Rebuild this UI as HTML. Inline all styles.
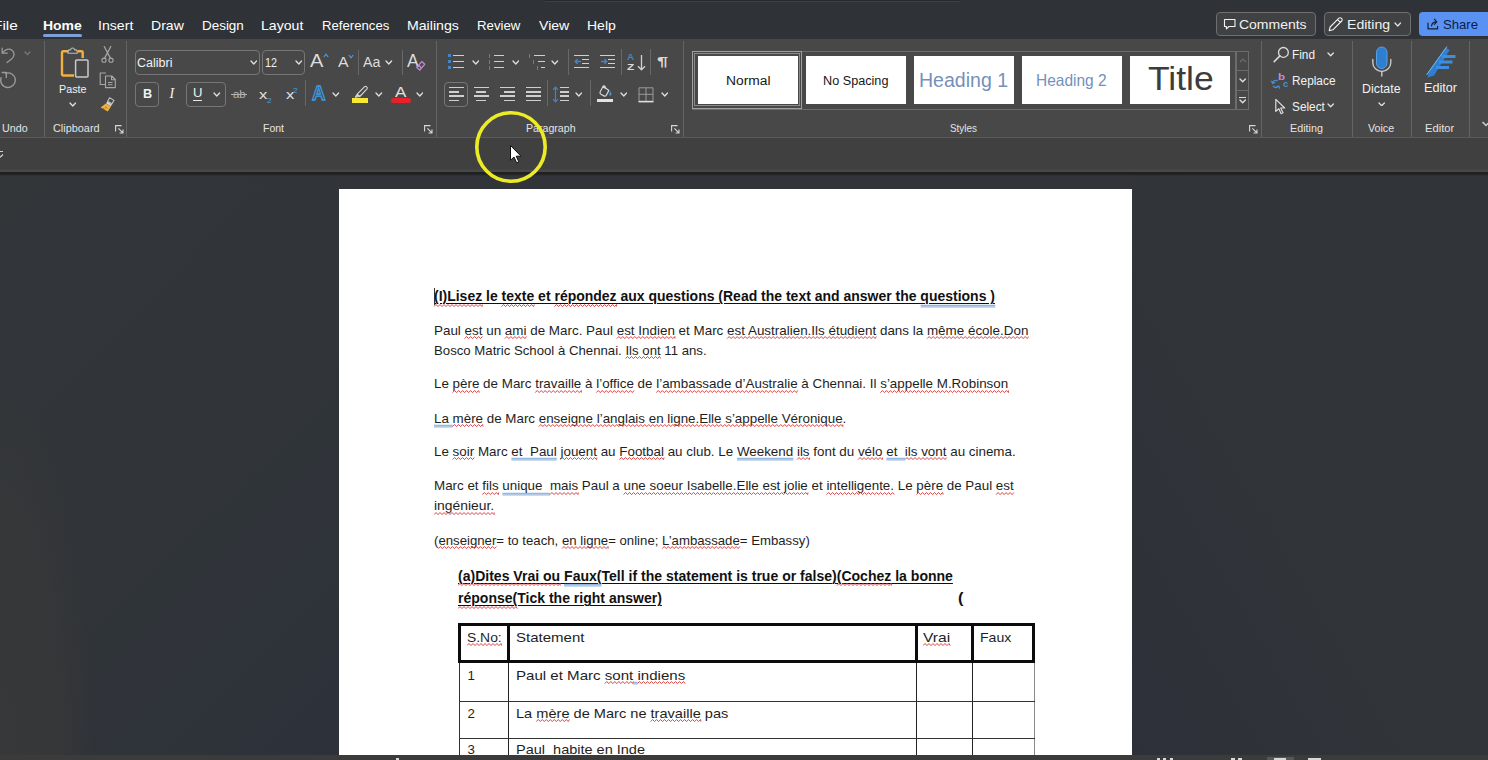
<!DOCTYPE html>
<html lang="fr"><head><meta charset="utf-8"><title>Document - Word</title>
<style>
html,body{margin:0;padding:0;}
body{width:1488px;height:760px;overflow:hidden;position:relative;background:#313539;font-family:"Liberation Sans",sans-serif;color:#fff;}
.t{position:absolute;white-space:pre;line-height:1;transform-origin:0 0;}
.d{color:#1a1a1a;}
.u{text-decoration:underline;text-decoration-thickness:1px;text-underline-offset:2px;}
.w{text-decoration:underline wavy #e23a3a;text-decoration-thickness:1px;text-underline-offset:2.5px;text-decoration-skip-ink:none;}
.g{text-decoration:underline double #3f7fd0;text-decoration-thickness:1px;text-underline-offset:2.5px;text-decoration-skip-ink:none;}
#top{position:absolute;left:0;top:0;width:1488px;height:39px;background:#2f3337;}
#rib{position:absolute;left:0;top:39px;width:1488px;height:98px;background:#484848;border-bottom:1px solid #5c5c5c;}
#qat{position:absolute;left:0;top:138px;width:1488px;height:33.5px;background:linear-gradient(#404040 0,#404040 31px,#494949 32.5px,#484848 33.5px);border-bottom:2px solid #202020;box-shadow:0 1px 1.5px rgba(20,20,20,.6);}
#page{position:absolute;left:338.5px;top:189.2px;width:793px;height:566px;background:#fff;}
#status{position:absolute;left:0;top:755px;width:1488px;height:5px;background:#3b3b3b;}
.sep{position:absolute;width:1px;background:#666;}
.btn{position:absolute;box-sizing:border-box;border:1px solid #757575;border-radius:4px;}
#status2{position:absolute;left:0;top:755px;width:1488px;height:5px;background:#3b3b3b;}
#bgl{position:absolute;left:0;top:172px;width:339px;height:583px;background:linear-gradient(135deg,#333639 0%,#313539 45%,#2d323a 100%);}
#bgl2{position:absolute;left:0;top:380px;width:120px;height:375px;background:radial-gradient(ellipse 95px 370px at 0% 100%,#373838 0%,#363738 55%,rgba(54,55,56,0) 100%);}
#bgr{position:absolute;left:1131px;top:172px;width:357px;height:583px;background:linear-gradient(60deg,#2d3039 0%,#303338 35%,#313539 60%);}

</style></head>
<body>
<div id="bgl"></div><div id="bgl2"></div><div id="bgr"></div>
<div id="top"><div style="position:absolute;left:545px;top:0;width:415px;height:1px;background:#26292c"></div><div style="position:absolute;left:545px;top:1px;width:415px;height:1px;background:#3d4145"></div></div><div id="rib"></div><div id="qat"></div><div id="page"></div><div id="status"></div>
<span class="t " style="left:-6.78px;top:18.70px;font-size:13.00px;transform:scaleX(1.1839);">File</span>
<span class="t " style="left:42.72px;top:18.70px;font-size:13.00px;transform:scaleX(1.0742);font-weight:bold;">Home</span>
<span class="t " style="left:98.22px;top:18.70px;font-size:13.00px;transform:scaleX(1.0857);">Insert</span>
<span class="t " style="left:151.22px;top:18.70px;font-size:13.00px;transform:scaleX(1.0812);">Draw</span>
<span class="t " style="left:201.72px;top:18.70px;font-size:13.00px;transform:scaleX(1.0329);">Design</span>
<span class="t " style="left:261.22px;top:18.70px;font-size:13.00px;transform:scaleX(1.0837);">Layout</span>
<span class="t " style="left:322.22px;top:18.70px;font-size:13.00px;transform:scaleX(1.0123);">References</span>
<span class="t " style="left:407.22px;top:18.70px;font-size:13.00px;transform:scaleX(1.0863);">Mailings</span>
<span class="t " style="left:477.22px;top:18.70px;font-size:13.00px;transform:scaleX(1.0158);">Review</span>
<span class="t " style="left:539.22px;top:18.70px;font-size:13.00px;transform:scaleX(1.0843);">View</span>
<span class="t " style="left:587.22px;top:18.70px;font-size:13.00px;transform:scaleX(1.0771);">Help</span>
<div class="" style="position:absolute;left:43px;top:34px;width:39px;height:3px;background:#7f9fd8;border-radius:2px;"></div>
<div class="" style="position:absolute;left:1216px;top:12px;width:100px;height:24px;border:1px solid #6f6f6f;border-radius:4px;box-sizing:border-box;background:#3f4142;"></div>
<svg style="position:absolute;left:1223px;top:18px" width="14" height="12" viewBox="0 0 14 12" fill="none"><path d="M1.5 1.5h10.5v7h-6l-2.6 2.4v-2.4h-1.9z" stroke="#f2f2f2" stroke-width="1.1" stroke-linejoin="round"/></svg>
<span class="t " style="left:1239.47px;top:17.75px;font-size:13.00px;transform:scaleX(1.0748);color:#f2f2f2;">Comments</span>
<div class="" style="position:absolute;left:1324px;top:12px;width:87px;height:24px;border:1px solid #6f6f6f;border-radius:4px;box-sizing:border-box;background:#3f4142;"></div>
<svg style="position:absolute;left:1328px;top:17px" width="16" height="15" viewBox="0 0 16 15" fill="none"><path d="M1.2 13.6l.9-3.6L10.9 1.2a1.6 1.6 0 0 1 2.3 0l.5.5a1.6 1.6 0 0 1 0 2.3L4.9 12.8z M9.6 2.6l2.7 2.7" stroke="#f2f2f2" stroke-width="1.1" stroke-linejoin="round"/></svg>
<span class="t " style="left:1347.22px;top:17.75px;font-size:13.00px;transform:scaleX(1.0830);color:#f2f2f2;">Editing</span>
<svg style="position:absolute;left:1394.25px;top:22px" width="7.5" height="5" viewBox="0 0 7.5 5" fill="none"><path d="M1 1l2.75 3 l2.75 -3" stroke="#e0e0e0" stroke-width="1.3" stroke-linecap="round" stroke-linejoin="round"/></svg>
<div class="" style="position:absolute;left:1419px;top:12px;width:75px;height:24px;border-radius:4px;background:#5a92f3;"></div>
<svg style="position:absolute;left:1426px;top:17px" width="14" height="14" viewBox="0 0 14 14" fill="none"><path d="M2 6.2v5.6h9.6V9.4 M5.6 8.8c.3-2.6 2-3.9 4.6-4 M8.4 2.2l2.4 2.6-2.4 2.5" stroke="#15202e" stroke-width="1.2" stroke-linejoin="round" stroke-linecap="round"/></svg>
<span class="t " style="left:1442.72px;top:17.75px;font-size:13.00px;transform:scaleX(1.0103);color:#0e1c4a;">Share</span>
<div class="" style="position:absolute;left:44px;top:41px;width:1px;height:96px;background:#646464;"></div>
<div class="" style="position:absolute;left:126px;top:41px;width:1px;height:96px;background:#646464;"></div>
<div class="" style="position:absolute;left:435.5px;top:41px;width:1px;height:96px;background:#646464;"></div>
<div class="" style="position:absolute;left:683px;top:41px;width:1px;height:96px;background:#646464;"></div>
<div class="" style="position:absolute;left:1260.5px;top:41px;width:1px;height:96px;background:#646464;"></div>
<div class="" style="position:absolute;left:1352px;top:41px;width:1px;height:96px;background:#646464;"></div>
<div class="" style="position:absolute;left:1411px;top:41px;width:1px;height:96px;background:#646464;"></div>
<div class="" style="position:absolute;left:1468.5px;top:41px;width:1px;height:96px;background:#646464;"></div>
<div class="" style="position:absolute;left:357.5px;top:50px;width:1px;height:25px;background:#686868;"></div>
<div class="" style="position:absolute;left:402px;top:50px;width:1px;height:25px;background:#686868;"></div>
<div class="" style="position:absolute;left:304.5px;top:80px;width:1px;height:26px;background:#686868;"></div>
<div class="" style="position:absolute;left:567.5px;top:49px;width:1px;height:26px;background:#686868;"></div>
<div class="" style="position:absolute;left:621px;top:49px;width:1px;height:26px;background:#686868;"></div>
<div class="" style="position:absolute;left:649.5px;top:49px;width:1px;height:26px;background:#686868;"></div>
<div class="" style="position:absolute;left:547px;top:80px;width:1px;height:26px;background:#686868;"></div>
<div class="" style="position:absolute;left:590px;top:80px;width:1px;height:26px;background:#686868;"></div>
<span class="t " style="left:2.21px;top:123.47px;font-size:11.50px;transform:scaleX(0.9330);color:#e4e4e4;">Undo</span>
<span class="t " style="left:53.21px;top:123.47px;font-size:11.50px;transform:scaleX(0.9457);color:#e4e4e4;">Clipboard</span>
<span class="t " style="left:262.81px;top:123.47px;font-size:11.50px;transform:scaleX(0.9104);color:#e4e4e4;">Font</span>
<span class="t " style="left:526.11px;top:123.47px;font-size:11.50px;transform:scaleX(0.9226);color:#e4e4e4;">Paragraph</span>
<span class="t " style="left:949.81px;top:123.47px;font-size:11.50px;transform:scaleX(0.8590);color:#e4e4e4;">Styles</span>
<span class="t " style="left:1289.81px;top:123.47px;font-size:11.50px;transform:scaleX(0.9356);color:#e4e4e4;">Editing</span>
<span class="t " style="left:1367.81px;top:123.47px;font-size:11.50px;transform:scaleX(0.9295);color:#e4e4e4;">Voice</span>
<span class="t " style="left:1424.81px;top:123.47px;font-size:11.50px;transform:scaleX(0.9703);color:#e4e4e4;">Editor</span>
<svg style="position:absolute;left:114.5px;top:124.5px" width="9" height="9" viewBox="0 0 9 9" fill="none"><path d="M.6 6.5V.6h5.9 M3.4 3.4l4.3 4.3 M4.6 8h3.4V4.6" stroke="#d8d8d8" stroke-width="1.1"/></svg>
<svg style="position:absolute;left:423.5px;top:124.5px" width="9" height="9" viewBox="0 0 9 9" fill="none"><path d="M.6 6.5V.6h5.9 M3.4 3.4l4.3 4.3 M4.6 8h3.4V4.6" stroke="#d8d8d8" stroke-width="1.1"/></svg>
<svg style="position:absolute;left:670.5px;top:124.5px" width="9" height="9" viewBox="0 0 9 9" fill="none"><path d="M.6 6.5V.6h5.9 M3.4 3.4l4.3 4.3 M4.6 8h3.4V4.6" stroke="#d8d8d8" stroke-width="1.1"/></svg>
<svg style="position:absolute;left:1248.5px;top:124.5px" width="9" height="9" viewBox="0 0 9 9" fill="none"><path d="M.6 6.5V.6h5.9 M3.4 3.4l4.3 4.3 M4.6 8h3.4V4.6" stroke="#d8d8d8" stroke-width="1.1"/></svg>
<svg style="position:absolute;left:0px;top:46px" width="18" height="18" viewBox="0 0 18 18" fill="none"><path d="M2.2 2.2v5h5 M2.6 7c2.2-3.6 6.4-5 9.4-2.8 3 2.300 2.600 6.300-.4 8.700L7 16.500" stroke="#9a9a9a" stroke-width="1.3" stroke-linecap="round" stroke-linejoin="round"/></svg>
<svg style="position:absolute;left:24px;top:51.2px" width="7" height="4.6" viewBox="0 0 7 4.6" fill="none"><path d="M1 1l2.5 2.6 l2.5 -2.6" stroke="#7c7c7c" stroke-width="1.2" stroke-linecap="round" stroke-linejoin="round"/></svg>
<svg style="position:absolute;left:-1px;top:71px" width="18" height="18" viewBox="0 0 18 18" fill="none"><path d="M6.500 2.340A7.300 7.300 0 1 1 2.140 6.700 M3.200 1.500h4.100v5.100" stroke="#9a9a9a" stroke-width="1.400" stroke-linecap="round" stroke-linejoin="round"/></svg>
<svg style="position:absolute;left:60px;top:46px" width="30" height="33" viewBox="0 0 30 33" fill="none"><path d="M8.500 5.200H3.300a1.300 1.300 0 0 0-1.300 1.300v21.700a1.300 1.300 0 0 0 1.300 1.300H14 M17.500 5.200h3.900a1.300 1.300 0 0 1 1.300 1.300V12" stroke="#f0b042" stroke-width="2.4" stroke-linejoin="round"/><path d="M8 7.200V5.500c0-1 .7-1.600 1.600-1.600h1c.2-1.200 1-1.900 2-1.900s1.800.7 2 1.900h1c.9 0 1.600.6 1.600 1.600v1.700z" stroke="#bdbdbd" stroke-width="1.100" stroke-linejoin="round"/><rect x="15.600" y="14" width="12.400" height="17" rx="1" stroke="#c9c9c9" stroke-width="1.500" fill="#484848"/></svg>
<span class="t " style="left:59.19px;top:84.41px;font-size:11.80px;transform:scaleX(0.9107);color:#f2f2f2;">Paste</span>
<svg style="position:absolute;left:68.5px;top:101.7px" width="7.6" height="5" viewBox="0 0 7.6 5" fill="none"><path d="M1 1l2.8 3 l2.8 -3" stroke="#e0e0e0" stroke-width="1.3" stroke-linecap="round" stroke-linejoin="round"/></svg>
<svg style="position:absolute;left:101px;top:45px" width="13" height="19" viewBox="0 0 13 19" fill="none"><path d="M3.200 1.500l6.200 11.600 M9.800 1.500L3.600 13.100" stroke="#a8a8a8" stroke-width="1.200" stroke-linecap="round"/><circle cx="3" cy="15.200" r="2.100" stroke="#a8a8a8" stroke-width="1.100"/><circle cx="10" cy="15.200" r="2.100" stroke="#a8a8a8" stroke-width="1.100"/></svg>
<svg style="position:absolute;left:98.5px;top:72px" width="18" height="17" viewBox="0 0 18 17" fill="none"><path d="M6.500 12.500H1.200V1H7 M6.500 4v11.600h9.800V7.500L12.800 4z M12.500 4.200v3.600h3.600 M9 10.500h4.500 M9 12.800h4.500" stroke="#a8a8a8" stroke-width="1.100" stroke-linejoin="round"/></svg>
<svg style="position:absolute;left:99px;top:96px" width="18" height="17" viewBox="0 0 18 17" fill="none"><path d="M10.600 1.800l4.400 2.600-2 3.400-4.400-2.600z" stroke="#c0c0c0" stroke-width="1.100" stroke-linejoin="round"/><path d="M8.200 5.600l4.800 2.800-1 1.800-4.900-2.800z" fill="#d8d8d8"/><path d="M6.800 7.600l5.200 3-3.200 4.900L1.600 11.400z" fill="#f0b042"/><path d="M4 12.200l2 1.200 M6 10.800l2.400 1.500" stroke="#a06a10" stroke-width=".8"/></svg>
<div class="" style="position:absolute;left:135px;top:50px;width:125px;height:25px;border:1px solid #767676;border-radius:4px;box-sizing:border-box;"></div>
<span class="t " style="left:136.75px;top:56.72px;font-size:12.50px;transform:scaleX(1.0007);color:#f2f2f2;">Calibri</span>
<svg style="position:absolute;left:249.9px;top:60.2px" width="7.6" height="5" viewBox="0 0 7.6 5" fill="none"><path d="M1 1l2.8 3 l2.8 -3" stroke="#e0e0e0" stroke-width="1.3" stroke-linecap="round" stroke-linejoin="round"/></svg>
<div class="" style="position:absolute;left:262px;top:50px;width:43px;height:25px;border:1px solid #767676;border-radius:4px;box-sizing:border-box;"></div>
<span class="t " style="left:264.75px;top:56.72px;font-size:12.50px;transform:scaleX(0.8666);color:#f2f2f2;">12</span>
<svg style="position:absolute;left:294.8px;top:60.2px" width="7.6" height="5" viewBox="0 0 7.6 5" fill="none"><path d="M1 1l2.8 3 l2.8 -3" stroke="#e0e0e0" stroke-width="1.3" stroke-linecap="round" stroke-linejoin="round"/></svg>
<span class="t " style="left:310.39px;top:51.64px;font-size:18.50px;transform:scaleX(1.0818);color:#dcdcdc;">A</span>
<svg style="position:absolute;left:322.5px;top:53px" width="6" height="5" viewBox="0 0 6 5" fill="none"><path d="M.8 4L3 1.200 5.200 4" stroke="#4f9be0" stroke-width="1.200"/></svg>
<span class="t " style="left:337.56px;top:55.45px;font-size:14.00px;transform:scaleX(1.1351);color:#dcdcdc;">A</span>
<svg style="position:absolute;left:347.5px;top:54px" width="6" height="5" viewBox="0 0 6 5" fill="none"><path d="M.8 1L3 3.800 5.200 1" stroke="#4f9be0" stroke-width="1.200"/></svg>
<span class="t " style="left:363.16px;top:55.45px;font-size:14.00px;transform:scaleX(1.0161);color:#dcdcdc;">Aa</span>
<svg style="position:absolute;left:385.2px;top:60.2px" width="7.6" height="5" viewBox="0 0 7.6 5" fill="none"><path d="M1 1l2.8 3 l2.8 -3" stroke="#e0e0e0" stroke-width="1.3" stroke-linecap="round" stroke-linejoin="round"/></svg>
<span class="t " style="left:406.95px;top:52.99px;font-size:17.50px;transform:scaleX(1.0066);color:#dcdcdc;">A</span>
<svg style="position:absolute;left:414.5px;top:60px" width="11" height="12" viewBox="0 0 11 12" fill="none"><path d="M6.800 1.600l3 2.600-5 5.800-3-2.600z M3.600 5.300l3 2.600" stroke="#c58ad6" stroke-width="1.300" stroke-linejoin="round"/></svg>
<div class="" style="position:absolute;left:135px;top:82px;width:24px;height:25px;border:1px solid #767676;border-radius:4px;box-sizing:border-box;"></div>
<span class="t " style="left:142.65px;top:88.02px;font-size:12.50px;transform:scaleX(1.0136);color:#f2f2f2;font-weight:bold;">B</span>
<span class="t" style="left:169.5px;top:87.33px;font-size:14px;font-family:'Liberation Serif',serif;font-style:italic;color:#f2f2f2">I</span>
<div class="" style="position:absolute;left:186px;top:82px;width:40px;height:25px;border:1px solid #767676;border-radius:4px;box-sizing:border-box;"></div>
<span class="t " style="left:193.05px;top:87.02px;font-size:12.50px;transform:scaleX(1.0468);color:#f2f2f2;">U</span>
<div class="" style="position:absolute;left:193.3px;top:99.5px;width:9px;height:1.2px;background:#e6e6e6;"></div>
<svg style="position:absolute;left:213px;top:91.7px" width="7.6" height="5" viewBox="0 0 7.6 5" fill="none"><path d="M1 1l2.8 3 l2.8 -3" stroke="#e0e0e0" stroke-width="1.3" stroke-linecap="round" stroke-linejoin="round"/></svg>
<span class="t " style="left:232.81px;top:88.87px;font-size:11.50px;transform:scaleX(0.9889);color:#b4b4b4;">ab</span>
<div class="" style="position:absolute;left:231.3px;top:94px;width:16px;height:1.1px;background:#b4b4b4;"></div>
<span class="t " style="left:259.22px;top:88.00px;font-size:13.00px;transform:scaleX(1.2769);color:#e0e0e0;">x</span>
<span class="t " style="left:267.08px;top:96.57px;font-size:7.00px;transform:scaleX(1.1815);color:#4f9be0;">2</span>
<span class="t " style="left:285.72px;top:88.00px;font-size:13.00px;transform:scaleX(1.2769);color:#e0e0e0;">x</span>
<span class="t " style="left:293.38px;top:86.57px;font-size:7.00px;transform:scaleX(1.1815);color:#4f9be0;">2</span>
<span class="t" style="left:312.3px;top:83.25px;font-size:20px;font-weight:bold;color:#484848;-webkit-text-stroke:1.3px #3d9be6;transform:scaleX(.93)">A</span>
<svg style="position:absolute;left:332px;top:91.7px" width="7.6" height="5" viewBox="0 0 7.6 5" fill="none"><path d="M1 1l2.8 3 l2.8 -3" stroke="#e0e0e0" stroke-width="1.3" stroke-linecap="round" stroke-linejoin="round"/></svg>
<svg style="position:absolute;left:353px;top:85px" width="16" height="13" viewBox="0 0 16 13" fill="none"><path d="M4.200 9.200l2.600 2.300 7-7.400c.7-.8.600-1.700-.1-2.300-.7-.6-1.700-.6-2.300.1z M4.200 9.200l-1.800 2.900 4.400-.6" stroke="#d8d8d8" stroke-width="1.100" stroke-linejoin="round"/></svg>
<div class="" style="position:absolute;left:352px;top:98px;width:16.3px;height:5px;background:#f5e932;"></div>
<svg style="position:absolute;left:375px;top:91.7px" width="7.6" height="5" viewBox="0 0 7.6 5" fill="none"><path d="M1 1l2.8 3 l2.8 -3" stroke="#e0e0e0" stroke-width="1.3" stroke-linecap="round" stroke-linejoin="round"/></svg>
<span class="t " style="left:395.07px;top:84.38px;font-size:15.50px;transform:scaleX(1.0978);color:#e0e0e0;">A</span>
<div class="" style="position:absolute;left:391px;top:98.3px;width:19.5px;height:5px;background:#e8202a;border-radius:2.5px;"></div>
<svg style="position:absolute;left:415.5px;top:91.7px" width="7.6" height="5" viewBox="0 0 7.6 5" fill="none"><path d="M1 1l2.8 3 l2.8 -3" stroke="#e0e0e0" stroke-width="1.3" stroke-linecap="round" stroke-linejoin="round"/></svg>
<div class="" style="position:absolute;left:448px;top:54.2px;width:3.2px;height:3.2px;background:#4684c2;"></div>
<div class="" style="position:absolute;left:453px;top:55.1px;width:10.6px;height:1.4px;background:#cfcfcf;"></div>
<div class="" style="position:absolute;left:448px;top:60.2px;width:3.2px;height:3.2px;background:#4684c2;"></div>
<div class="" style="position:absolute;left:453px;top:61.1px;width:10.6px;height:1.4px;background:#cfcfcf;"></div>
<div class="" style="position:absolute;left:448px;top:66.1px;width:3.2px;height:3.2px;background:#4684c2;"></div>
<div class="" style="position:absolute;left:453px;top:67px;width:10.6px;height:1.4px;background:#cfcfcf;"></div>
<svg style="position:absolute;left:471.5px;top:59.7px" width="7.6" height="5" viewBox="0 0 7.6 5" fill="none"><path d="M1 1l2.8 3 l2.8 -3" stroke="#e0e0e0" stroke-width="1.3" stroke-linecap="round" stroke-linejoin="round"/></svg>
<div class="" style="position:absolute;left:489.2px;top:53.9px;width:1.2px;height:3.8px;background:#4684c2;"></div>
<div class="" style="position:absolute;left:493.5px;top:55.1px;width:10.5px;height:1.4px;background:#cfcfcf;"></div>
<div class="" style="position:absolute;left:489.2px;top:59.9px;width:1.2px;height:3.8px;background:#4684c2;"></div>
<div class="" style="position:absolute;left:493.5px;top:61.1px;width:10.5px;height:1.4px;background:#cfcfcf;"></div>
<div class="" style="position:absolute;left:489.2px;top:65.8px;width:1.2px;height:3.8px;background:#4684c2;"></div>
<div class="" style="position:absolute;left:493.5px;top:67px;width:10.5px;height:1.4px;background:#cfcfcf;"></div>
<svg style="position:absolute;left:511.8px;top:59.7px" width="7.6" height="5" viewBox="0 0 7.6 5" fill="none"><path d="M1 1l2.8 3 l2.8 -3" stroke="#e0e0e0" stroke-width="1.3" stroke-linecap="round" stroke-linejoin="round"/></svg>
<div class="" style="position:absolute;left:529.2px;top:53.9px;width:1.2px;height:3.8px;background:#4684c2;"></div>
<div class="" style="position:absolute;left:534px;top:55.1px;width:11px;height:1.4px;background:#cfcfcf;"></div>
<div class="" style="position:absolute;left:533px;top:59.9px;width:1.2px;height:3.8px;background:#4684c2;"></div>
<div class="" style="position:absolute;left:537.5px;top:61.1px;width:7.5px;height:1.4px;background:#cfcfcf;"></div>
<div class="" style="position:absolute;left:536.5px;top:65.8px;width:1.2px;height:3.8px;background:#4684c2;"></div>
<div class="" style="position:absolute;left:541px;top:67px;width:4px;height:1.4px;background:#cfcfcf;"></div>
<svg style="position:absolute;left:551.2px;top:59.7px" width="7.6" height="5" viewBox="0 0 7.6 5" fill="none"><path d="M1 1l2.8 3 l2.8 -3" stroke="#e0e0e0" stroke-width="1.3" stroke-linecap="round" stroke-linejoin="round"/></svg>
<div class="" style="position:absolute;left:573.5px;top:54.9px;width:15.8px;height:1.4px;background:#cfcfcf;"></div>
<div class="" style="position:absolute;left:573.5px;top:67.1px;width:15.8px;height:1.4px;background:#cfcfcf;"></div>
<div class="" style="position:absolute;left:582px;top:59px;width:7.3px;height:1.4px;background:#cfcfcf;"></div>
<div class="" style="position:absolute;left:582px;top:63px;width:7.3px;height:1.4px;background:#cfcfcf;"></div>
<svg style="position:absolute;left:573.5px;top:58.2px" width="8" height="7" viewBox="0 0 8 7" fill="none"><path d="M7 3.500H1.500 M3.600 1L1.200 3.500 3.600 6" stroke="#4684c2" stroke-width="1.300"/></svg>
<div class="" style="position:absolute;left:599.7px;top:54.9px;width:15.3px;height:1.4px;background:#cfcfcf;"></div>
<div class="" style="position:absolute;left:599.7px;top:67.1px;width:15.3px;height:1.4px;background:#cfcfcf;"></div>
<div class="" style="position:absolute;left:608px;top:59px;width:7px;height:1.4px;background:#cfcfcf;"></div>
<div class="" style="position:absolute;left:608px;top:63px;width:7px;height:1.4px;background:#cfcfcf;"></div>
<svg style="position:absolute;left:599.5px;top:58.2px" width="8" height="7" viewBox="0 0 8 7" fill="none"><path d="M1 3.500H6.500 M4.400 1L6.800 3.500 4.400 6" stroke="#4684c2" stroke-width="1.300"/></svg>
<span class="t " style="left:627.49px;top:53.40px;font-size:8.50px;transform:scaleX(1.1485);color:#4684c2;font-weight:bold;">A</span>
<span class="t " style="left:627.43px;top:61.96px;font-size:9.50px;transform:scaleX(1.2321);color:#dcdcdc;font-weight:bold;">Z</span>
<svg style="position:absolute;left:636.5px;top:53.5px" width="9" height="18" viewBox="0 0 9 18" fill="none"><path d="M4.500 1v14.500 M1 12.200l3.500 3.600 3.500-3.600" stroke="#d0d0d0" stroke-width="1.300"/></svg>
<span class="t " style="left:657.39px;top:55.37px;font-size:13.50px;transform:scaleX(1.4850);color:#d8d8d8;font-weight:bold;">¶</span>
<div class="" style="position:absolute;left:444px;top:82px;width:24px;height:25px;border:1px solid #767676;border-radius:4px;box-sizing:border-box;"></div>
<div class="" style="position:absolute;left:448.6px;top:87px;width:15px;height:1.4px;background:#cfcfcf;"></div>
<div class="" style="position:absolute;left:448.6px;top:91.2px;width:10.5px;height:1.4px;background:#cfcfcf;"></div>
<div class="" style="position:absolute;left:448.6px;top:95.4px;width:15px;height:1.4px;background:#cfcfcf;"></div>
<div class="" style="position:absolute;left:448.6px;top:99.5px;width:10.5px;height:1.4px;background:#cfcfcf;"></div>
<div class="" style="position:absolute;left:474px;top:87px;width:14.6px;height:1.4px;background:#cfcfcf;"></div>
<div class="" style="position:absolute;left:476.3px;top:91.2px;width:10px;height:1.4px;background:#cfcfcf;"></div>
<div class="" style="position:absolute;left:474px;top:95.4px;width:14.6px;height:1.4px;background:#cfcfcf;"></div>
<div class="" style="position:absolute;left:476.3px;top:99.5px;width:10px;height:1.4px;background:#cfcfcf;"></div>
<div class="" style="position:absolute;left:499.8px;top:87px;width:15.2px;height:1.4px;background:#cfcfcf;"></div>
<div class="" style="position:absolute;left:504.2px;top:91.2px;width:10.8px;height:1.4px;background:#cfcfcf;"></div>
<div class="" style="position:absolute;left:499.8px;top:95.4px;width:15.2px;height:1.4px;background:#cfcfcf;"></div>
<div class="" style="position:absolute;left:504.2px;top:99.5px;width:10.8px;height:1.4px;background:#cfcfcf;"></div>
<div class="" style="position:absolute;left:525.5px;top:87px;width:15.1px;height:1.4px;background:#cfcfcf;"></div>
<div class="" style="position:absolute;left:525.5px;top:91.2px;width:15.1px;height:1.4px;background:#cfcfcf;"></div>
<div class="" style="position:absolute;left:525.5px;top:95.4px;width:15.1px;height:1.4px;background:#cfcfcf;"></div>
<div class="" style="position:absolute;left:525.5px;top:99.5px;width:15.1px;height:1.4px;background:#cfcfcf;"></div>
<div class="" style="position:absolute;left:559.5px;top:87px;width:9.5px;height:1.4px;background:#cfcfcf;"></div>
<div class="" style="position:absolute;left:559.5px;top:91.2px;width:9.5px;height:1.4px;background:#cfcfcf;"></div>
<div class="" style="position:absolute;left:559.5px;top:95.4px;width:9.5px;height:1.4px;background:#cfcfcf;"></div>
<div class="" style="position:absolute;left:559.5px;top:99.5px;width:9.5px;height:1.4px;background:#cfcfcf;"></div>
<svg style="position:absolute;left:551.5px;top:85.5px" width="7" height="17" viewBox="0 0 7 17" fill="none"><path d="M3.500 1.200v14.600 M1 3.800L3.500 1.200 6 3.800 M1 13.200l2.500 2.600 2.500-2.600" stroke="#4684c2" stroke-width="1.200"/></svg>
<svg style="position:absolute;left:574.6px;top:91.7px" width="7.6" height="5" viewBox="0 0 7.6 5" fill="none"><path d="M1 1l2.8 3 l2.8 -3" stroke="#e0e0e0" stroke-width="1.3" stroke-linecap="round" stroke-linejoin="round"/></svg>
<svg style="position:absolute;left:597px;top:85px" width="17" height="14" viewBox="0 0 17 14" fill="none"><path d="M6.200 1.200l-3 5.600c-.5 1-.2 1.900.7 2.500l3 1.600c1 .5 1.900.2 2.400-.7l2.600-4.800z" stroke="#d8d8d8" stroke-width="1.200" stroke-linejoin="round"/><path d="M6 1.600c.6-1.200 2.600-.9 2.300.9L8 4" stroke="#d8d8d8" stroke-width="1.100"/><path d="M13.200 6.200c1.300 1.700 1.700 2.900 1.100 3.800-.5.700-1.600.7-2-.1-.4-.9 0-2 .9-3.700z" fill="#4a8fd0"/></svg>
<div class="" style="position:absolute;left:597.4px;top:99px;width:15.6px;height:3.4px;background:#e2e2e2;"></div>
<svg style="position:absolute;left:619.5px;top:91.7px" width="7.6" height="5" viewBox="0 0 7.6 5" fill="none"><path d="M1 1l2.8 3 l2.8 -3" stroke="#e0e0e0" stroke-width="1.3" stroke-linecap="round" stroke-linejoin="round"/></svg>
<svg style="position:absolute;left:637.5px;top:86.5px" width="16" height="16" viewBox="0 0 16 16" fill="none"><path d="M1 .8v13 M8 .8v13 M15 .8v13 M1 .8h14 M1 7.300h14" stroke="#9a9a9a" stroke-width="1"/><path d="M.5 14.600h15" stroke="#e0e0e0" stroke-width="1.600"/></svg>
<svg style="position:absolute;left:660.7px;top:91.7px" width="7.6" height="5" viewBox="0 0 7.6 5" fill="none"><path d="M1 1l2.8 3 l2.8 -3" stroke="#e0e0e0" stroke-width="1.3" stroke-linecap="round" stroke-linejoin="round"/></svg>
<div class="" style="position:absolute;left:692px;top:51px;width:543.5px;height:58.5px;border:1px solid #6c6c6c;box-sizing:border-box;"></div>
<div class="" style="position:absolute;left:692px;top:51px;width:110px;height:57.5px;border:1px solid #a0a0a0;box-sizing:border-box;"></div>
<div class="" style="position:absolute;left:694.3px;top:53.2px;width:105.6px;height:53.2px;border:1px solid #8a8a8a;box-sizing:border-box;"></div>
<div class="" style="position:absolute;left:697.5px;top:55.5px;width:100.3px;height:48.3px;background:#fff;"></div>
<div class="" style="position:absolute;left:805.5px;top:55.5px;width:100.3px;height:48.3px;background:#fff;"></div>
<div class="" style="position:absolute;left:913.75px;top:55.5px;width:100.3px;height:48.3px;background:#fff;"></div>
<div class="" style="position:absolute;left:1021.75px;top:55.5px;width:100.3px;height:48.3px;background:#fff;"></div>
<div class="" style="position:absolute;left:1129.75px;top:55.5px;width:100.3px;height:48.3px;background:#fff;"></div>
<span class="t " style="left:725.53px;top:74.84px;font-size:12.00px;transform:scaleX(1.1494);color:#161616;">Normal</span>
<span class="t " style="left:823.03px;top:74.84px;font-size:12.00px;transform:scaleX(1.0549);color:#161616;">No Spacing</span>
<span class="t " style="left:918.77px;top:69.85px;font-size:20.50px;transform:scaleX(0.9528);color:#7590ba;">Heading 1</span>
<span class="t " style="left:1035.51px;top:71.63px;font-size:16.50px;transform:scaleX(0.9392);color:#7590ba;">Heading 2</span>
<span class="t " style="left:1147.80px;top:62.99px;font-size:32.50px;transform:scaleX(1.0923);color:#3c3c3c;">Title</span>
<div class="" style="position:absolute;left:1235.5px;top:51px;width:13.5px;height:58.5px;border:1px solid #6c6c6c;box-sizing:border-box;"></div>
<div class="" style="position:absolute;left:1235.5px;top:70.3px;width:13.5px;height:1px;background:#6c6c6c;"></div>
<div class="" style="position:absolute;left:1235.5px;top:90px;width:13.5px;height:1px;background:#6c6c6c;"></div>
<svg style="position:absolute;left:1238.5px;top:58px" width="8" height="5" viewBox="0 0 8 5" fill="none"><path d="M1 4L4 1 7 4" stroke="#6e6e6e" stroke-width="1.200"/></svg>
<svg style="position:absolute;left:1238.6px;top:78.4px" width="7.4" height="4.8" viewBox="0 0 7.4 4.8" fill="none"><path d="M1 1l2.7 2.8 l2.7 -2.8" stroke="#e0e0e0" stroke-width="1.3" stroke-linecap="round" stroke-linejoin="round"/></svg>
<div class="" style="position:absolute;left:1239px;top:96.6px;width:6.6px;height:1.2px;background:#dcdcdc;"></div>
<svg style="position:absolute;left:1238.6px;top:98.9px" width="7.4" height="4.8" viewBox="0 0 7.4 4.8" fill="none"><path d="M1 1l2.7 2.8 l2.7 -2.8" stroke="#e0e0e0" stroke-width="1.3" stroke-linecap="round" stroke-linejoin="round"/></svg>
<svg style="position:absolute;left:1272.5px;top:45.5px" width="17" height="17" viewBox="0 0 17 17" fill="none"><circle cx="10.400" cy="6.400" r="4.900" stroke="#dcdcdc" stroke-width="1.300"/><path d="M6.900 9.900L1.200 15.600" stroke="#dcdcdc" stroke-width="1.500" stroke-linecap="round"/></svg>
<span class="t " style="left:1292.26px;top:49.19px;font-size:12.30px;transform:scaleX(0.9604);color:#f2f2f2;">Find</span>
<svg style="position:absolute;left:1327.3px;top:51.9px" width="7.4" height="4.8" viewBox="0 0 7.4 4.8" fill="none"><path d="M1 1l2.7 2.8 l2.7 -2.8" stroke="#e0e0e0" stroke-width="1.3" stroke-linecap="round" stroke-linejoin="round"/></svg>
<span class="t " style="left:1277.63px;top:72.26px;font-size:9.50px;transform:scaleX(1.2149);color:#c58ad6;font-weight:bold;">b</span>
<span class="t " style="left:1283.06px;top:80.18px;font-size:9.00px;transform:scaleX(1.0588);color:#4a8fd0;font-weight:bold;">c</span>
<svg style="position:absolute;left:1271.3px;top:78.5px" width="12" height="10" viewBox="0 0 12 10" fill="none"><path d="M6.300 1.600A3.400 3.400 0 0 0 1.600 4.400 M1.600 4.400L.6 2.200 M1.600 4.400l2.200-.7 M2.200 7.200A3.400 3.400 0 0 0 7.800 7 M7.800 7l.8 2.100 M7.800 7l-2.100.5" stroke="#4a8fd0" stroke-width="1.200" stroke-linecap="round"/></svg>
<span class="t " style="left:1292.26px;top:74.79px;font-size:12.30px;transform:scaleX(0.9635);color:#f2f2f2;">Replace</span>
<svg style="position:absolute;left:1273.5px;top:98px" width="13" height="17" viewBox="0 0 13 17" fill="none"><path d="M1.800 1.400v12l3-2.700 2.300 5 1.900-.9-2.300-4.800h4z" stroke="#dcdcdc" stroke-width="1.200" stroke-linejoin="round"/></svg>
<span class="t " style="left:1292.46px;top:100.59px;font-size:12.30px;transform:scaleX(0.9603);color:#f2f2f2;">Select</span>
<svg style="position:absolute;left:1327.3px;top:102.9px" width="7.4" height="4.8" viewBox="0 0 7.4 4.8" fill="none"><path d="M1 1l2.7 2.8 l2.7 -2.8" stroke="#e0e0e0" stroke-width="1.3" stroke-linecap="round" stroke-linejoin="round"/></svg>
<svg style="position:absolute;left:1370px;top:45px" width="24" height="33" viewBox="0 0 24 33" fill="none"><rect x="6.500" y="2" width="10.500" height="21.500" rx="5.250" fill="#2f7fd0" stroke="#5aa0e6" stroke-width="1"/><path d="M2.800 14.500v3a9 9 0 0 0 18 0v-3" stroke="#c8c8c8" stroke-width="1.400" stroke-linecap="round"/><path d="M11.800 26.600v4.500" stroke="#c8c8c8" stroke-width="1.400" stroke-linecap="round"/></svg>
<span class="t " style="left:1362.26px;top:83.49px;font-size:12.30px;transform:scaleX(1.0065);color:#f2f2f2;">Dictate</span>
<svg style="position:absolute;left:1377.6px;top:101.6px" width="7.4" height="4.8" viewBox="0 0 7.4 4.8" fill="none"><path d="M1 1l2.7 2.8 l2.7 -2.8" stroke="#e0e0e0" stroke-width="1.3" stroke-linecap="round" stroke-linejoin="round"/></svg>
<svg style="position:absolute;left:1423px;top:45px" width="35" height="34" viewBox="0 0 35 34" fill="none"><path d="M22.500 2.500l4.200 2.400L11 30.500l-6.300 2 1-6.200z" fill="#2f7fd0"/><path d="M19 11.500h13.500 M16 17h13.500 M13 22.500h13" stroke="#3d8ee0" stroke-width="3"/><path d="M3.500 30L24 1.500" stroke="#7ab4ee" stroke-width="1"/></svg>
<span class="t " style="left:1423.51px;top:81.79px;font-size:12.30px;transform:scaleX(1.0264);color:#f2f2f2;">Editor</span>
<svg style="position:absolute;left:1481px;top:121px" width="8" height="6" viewBox="0 0 8 6" fill="none"><path d="M1.500 1l3.500 3.500 3.500-3.500" stroke="#d0d0d0" stroke-width="1.500"/></svg>
<span class="t u" style="left:433.64px;top:289.41px;font-size:14.40px;transform:scaleX(0.9716);color:#111;font-weight:bold;">(I)Lisez le texte et répondez aux questions (Read the text and answer the questions )</span>
<svg style="position:absolute;left:433.636px;top:303.8px" width="562.34" height="5" viewBox="0 0 562.34 5" fill="none"><path d="M0.0 2.6L2.0 0.5L4.0 2.6L6.0 0.5L8.0 2.6L10.0 0.5L12.0 2.6L14.0 0.5L16.0 2.6L18.0 0.5L20.0 2.6L22.0 0.5L24.0 2.6L26.0 0.5L28.0 2.6L30.0 0.5L32.0 2.6L34.0 0.5L36.0 2.6L38.0 0.5L40.0 2.6L42.0 0.5L44.0 2.6L46.0 0.5L48.0 2.6L48.2 0.5M67.6 2.6L69.6 0.5L71.6 2.6L73.6 0.5L75.6 2.6L77.6 0.5L79.6 2.6L81.6 0.5L83.6 2.6L85.6 0.5L87.6 2.6L89.6 0.5L91.6 2.6L93.6 0.5L95.6 2.6L97.6 0.5L99.6 2.6L100.3 0.5M120.5 2.6L122.5 0.5L124.5 2.6L126.5 0.5L128.5 2.6L130.5 0.5L132.5 2.6L134.5 0.5L136.5 2.6L138.5 0.5L140.5 2.6L142.5 0.5L144.5 2.6L146.5 0.5L148.5 2.6L150.5 0.5L152.5 2.6L154.5 0.5L156.5 2.6L158.5 0.5L160.5 2.6L162.5 0.5L164.5 2.6L166.5 0.5L168.5 2.6L170.5 0.5L172.5 2.6L174.5 0.5L176.5 2.6L178.5 0.5L180.5 2.6L182.5 0.5L182.7 2.6" stroke="#e04444" stroke-width="1" stroke-linejoin="round"/><path d="M486.7 1.3H561.3M486.7 2.9H561.3" stroke="#5a8fcc" stroke-width="0.8"/></svg>
<span class="t " style="left:433.74px;top:324.83px;font-size:12.60px;transform:scaleX(1.0653);color:#1e1e1e;">Paul est un ami de Marc. Paul est Indien et Marc est Australien.Ils étudient dans la même école.Don</span>
<svg style="position:absolute;left:433.744px;top:336.4px" width="595.66" height="5" viewBox="0 0 595.66 5" fill="none"><path d="M30.6 2.6L32.6 0.5L34.6 2.6L36.6 0.5L38.6 2.6L40.6 0.5L42.6 2.6L44.6 0.5L46.6 2.6L48.5 0.5M70.9 2.6L72.9 0.5L74.9 2.6L76.9 0.5L78.9 2.6L80.9 0.5L82.9 2.6L84.9 0.5L86.9 2.6L88.9 0.5L90.9 2.6L92.5 0.5M182.8 2.6L184.8 0.5L186.8 2.6L188.8 0.5L190.8 2.6L192.8 0.5L194.8 2.6L196.8 0.5L198.8 2.6L200.8 0.5L202.8 2.6L204.8 0.5L206.8 2.6L208.8 0.5L210.8 2.6L212.8 0.5L214.8 2.6L216.8 0.5L218.8 2.6L220.8 0.5L222.8 2.6L224.8 0.5L226.8 2.6L228.8 0.5L230.8 2.6L232.8 0.5L234.8 2.6L236.8 0.5L238.8 2.6L240.8 0.5L241.0 2.6M293.2 2.6L295.2 0.5L297.2 2.6L299.2 0.5L301.2 2.6L303.2 0.5L305.2 2.6L307.2 0.5L309.2 2.6L311.2 0.5L313.2 2.6L315.2 0.5L317.2 2.6L319.2 0.5L321.2 2.6L323.2 0.5L325.2 2.6L327.2 0.5L329.2 2.6L331.2 0.5L333.2 2.6L335.2 0.5L337.2 2.6L339.2 0.5L341.2 2.6L343.2 0.5L345.2 2.6L347.2 0.5L349.2 2.6L351.2 0.5L353.2 2.6L355.2 0.5L357.2 2.6L359.2 0.5L361.2 2.6L363.2 0.5L365.2 2.6L367.2 0.5L369.2 2.6L371.2 0.5L373.2 2.6L375.2 0.5L377.2 2.6L379.2 0.5L381.2 2.6L383.2 0.5L385.2 2.6L387.2 0.5L389.2 2.6L391.2 0.5L393.2 2.6L395.2 0.5L397.2 2.6L399.2 0.5L401.2 2.6L403.2 0.5L405.2 2.6L407.2 0.5L409.2 2.6L411.2 0.5L413.2 2.6L415.2 0.5L417.2 2.6L419.2 0.5L421.2 2.6L423.2 0.5L425.2 2.6L427.2 0.5L429.2 2.6L431.2 0.5L433.2 2.6L435.2 0.5L437.2 2.6L439.2 0.5L441.2 2.6L442.4 0.5M493.2 2.6L495.2 0.5L497.2 2.6L499.2 0.5L501.2 2.6L503.2 0.5L505.2 2.6L507.2 0.5L509.2 2.6L511.2 0.5L513.2 2.6L515.2 0.5L517.2 2.6L519.2 0.5L521.2 2.6L523.2 0.5L525.2 2.6L527.2 0.5L529.2 2.6L531.2 0.5L533.2 2.6L535.2 0.5L537.2 2.6L539.2 0.5L541.2 2.6L543.2 0.5L545.2 2.6L547.2 0.5L549.2 2.6L551.2 0.5L553.2 2.6L555.2 0.5L557.2 2.6L559.2 0.5L561.2 2.6L563.2 0.5L565.2 2.6L567.2 0.5L569.2 2.6L571.2 0.5L573.2 2.6L575.2 0.5L577.2 2.6L579.2 0.5L581.2 2.6L583.2 0.5L585.2 2.6L587.2 0.5L589.2 2.6L591.2 0.5L593.2 2.6L594.7 0.5" stroke="#e04444" stroke-width="1" stroke-linejoin="round"/></svg>
<span class="t " style="left:433.74px;top:344.63px;font-size:12.60px;transform:scaleX(1.0478);color:#1e1e1e;">Bosco Matric School à Chennai. Ils ont 11 ans.</span>
<svg style="position:absolute;left:433.744px;top:356.2px" width="273.76" height="5" viewBox="0 0 273.76 5" fill="none"><path d="M191.5 2.6L193.5 0.5L195.5 2.6L197.5 0.5L199.5 2.6L201.5 0.5L203.5 2.6L205.5 0.5L207.5 2.6L209.5 0.5L211.5 2.6L213.5 0.5L215.5 2.6L217.5 0.5L219.5 2.6L221.5 0.5L223.5 2.6L225.5 0.5L226.8 2.6" stroke="#e04444" stroke-width="1" stroke-linejoin="round"/></svg>
<span class="t " style="left:433.74px;top:378.33px;font-size:12.60px;transform:scaleX(1.0629);color:#1e1e1e;">Le père de Marc travaille à l’office de l’ambassade d’Australie à Chennai. Il s’appelle M.Robinson</span>
<svg style="position:absolute;left:433.744px;top:389.9px" width="575.46" height="5" viewBox="0 0 575.46 5" fill="none"><path d="M18.6 2.6L20.6 0.5L22.6 2.6L24.6 0.5L26.6 2.6L28.6 0.5L30.6 2.6L32.6 0.5L34.6 2.6L36.6 0.5L38.6 2.6L40.6 0.5L42.6 2.6L44.6 0.5L45.4 2.6M101.2 2.6L103.2 0.5L105.2 2.6L107.2 0.5L109.2 2.6L111.2 0.5L113.2 2.6L115.2 0.5L117.2 2.6L119.2 0.5L121.2 2.6L123.2 0.5L125.2 2.6L127.2 0.5L129.2 2.6L131.2 0.5L133.2 2.6L135.2 0.5L137.2 2.6L139.2 0.5L141.2 2.6L143.2 0.5L145.2 2.6L147.2 0.5L147.4 2.6M162.3 2.6L164.3 0.5L166.3 2.6L168.3 0.5L170.3 2.6L172.3 0.5L174.3 2.6L176.3 0.5L178.3 2.6L180.3 0.5L182.3 2.6L184.3 0.5L186.3 2.6L188.3 0.5L190.3 2.6L192.3 0.5L194.3 2.6L196.3 0.5L198.3 2.6L200.0 0.5M222.3 2.6L224.3 0.5L226.3 2.6L228.3 0.5L230.3 2.6L232.3 0.5L234.3 2.6L236.3 0.5L238.3 2.6L240.3 0.5L242.3 2.6L244.3 0.5L246.3 2.6L248.3 0.5L250.3 2.6L252.3 0.5L254.3 2.6L256.3 0.5L258.3 2.6L260.3 0.5L262.3 2.6L264.3 0.5L266.3 2.6L268.3 0.5L270.3 2.6L272.3 0.5L274.3 2.6L276.3 0.5L278.3 2.6L280.3 0.5L282.3 2.6L284.3 0.5L286.3 2.6L288.3 0.5L290.3 2.6L292.3 0.5L294.3 2.6L296.3 0.5L298.3 2.6L300.3 0.5L302.3 2.6L304.3 0.5L306.3 2.6L308.3 0.5L310.3 2.6L312.3 0.5L314.3 2.6L316.3 0.5L318.3 2.6L320.3 0.5L322.3 2.6L324.3 0.5L326.3 2.6L328.3 0.5L330.3 2.6L332.3 0.5L334.3 2.6L336.3 0.5L338.3 2.6L340.3 0.5L342.3 2.6L344.3 0.5L346.3 2.6L348.3 0.5L350.3 2.6L352.3 0.5L354.3 2.6L356.3 0.5L358.3 2.6L360.3 0.5L362.3 2.6L363.8 0.5M446.4 2.6L448.4 0.5L450.4 2.6L452.4 0.5L454.4 2.6L456.4 0.5L458.4 2.6L460.4 0.5L462.4 2.6L464.4 0.5L466.4 2.6L468.4 0.5L470.4 2.6L472.4 0.5L474.4 2.6L476.4 0.5L478.4 2.6L480.4 0.5L482.4 2.6L484.4 0.5L486.4 2.6L488.4 0.5L490.4 2.6L492.4 0.5L494.4 2.6L496.4 0.5L498.4 2.6L500.4 0.5L502.4 2.6L504.4 0.5L506.4 2.6L508.4 0.5L510.4 2.6L512.4 0.5L514.4 2.6L516.4 0.5L518.4 2.6L520.4 0.5L522.4 2.6L524.4 0.5L526.4 2.6L528.4 0.5L530.4 2.6L532.4 0.5L534.4 2.6L536.4 0.5L538.4 2.6L540.4 0.5L542.4 2.6L544.4 0.5L546.4 2.6L548.4 0.5L550.4 2.6L552.4 0.5L554.4 2.6L556.4 0.5L558.4 2.6L560.4 0.5L562.4 2.6L564.4 0.5L566.4 2.6L568.4 0.5L570.4 2.6L572.4 0.5L574.4 2.6L574.5 0.5" stroke="#e04444" stroke-width="1" stroke-linejoin="round"/></svg>
<span class="t " style="left:433.74px;top:412.53px;font-size:12.60px;transform:scaleX(1.0612);color:#1e1e1e;">La mère de Marc enseigne l’anglais en ligne.Elle s’appelle Véronique.</span>
<svg style="position:absolute;left:433.744px;top:424.1px" width="413.56" height="5" viewBox="0 0 413.56 5" fill="none"><path d="M18.6 2.6L20.6 0.5L22.6 2.6L24.6 0.5L26.6 2.6L28.6 0.5L30.6 2.6L32.6 0.5L34.6 2.6L36.6 0.5L38.6 2.6L40.6 0.5L42.6 2.6L44.6 0.5L46.6 2.6L48.6 0.5L49.1 2.6M104.8 2.6L106.8 0.5L108.8 2.6L110.8 0.5L112.8 2.6L114.8 0.5L116.8 2.6L118.8 0.5L120.8 2.6L122.8 0.5L124.8 2.6L126.8 0.5L128.8 2.6L130.8 0.5L132.8 2.6L134.8 0.5L136.8 2.6L138.8 0.5L140.8 2.6L142.8 0.5L144.8 2.6L146.8 0.5L148.8 2.6L150.8 0.5L152.8 2.6L154.8 0.5L156.8 2.6L158.8 0.5L160.8 2.6L162.8 0.5L164.8 2.6L166.8 0.5L168.8 2.6L170.8 0.5L172.8 2.6L174.8 0.5L176.8 2.6L178.8 0.5L180.8 2.6L182.8 0.5L184.8 2.6L186.8 0.5L188.8 2.6L190.8 0.5L192.8 2.6L194.8 0.5L196.8 2.6L198.8 0.5L200.8 2.6L202.8 0.5L204.8 2.6L206.8 0.5L208.8 2.6L210.8 0.5L212.8 2.6L214.8 0.5L216.8 2.6L218.8 0.5L220.8 2.6L222.8 0.5L224.8 2.6L226.8 0.5L228.8 2.6L230.8 0.5L232.8 2.6L234.8 0.5L236.8 2.6L238.8 0.5L240.8 2.6L242.8 0.5L244.8 2.6L246.8 0.5L248.8 2.6L250.8 0.5L252.8 2.6L254.8 0.5L256.8 2.6L258.8 0.5L260.8 2.6L262.8 0.5L264.8 2.6L266.8 0.5L268.8 2.6L270.8 0.5L272.8 2.6L274.8 0.5L276.8 2.6L278.8 0.5L280.8 2.6L282.8 0.5L284.8 2.6L286.8 0.5L288.8 2.6L290.8 0.5L292.8 2.6L294.8 0.5L296.8 2.6L298.8 0.5L300.8 2.6L302.8 0.5L304.8 2.6L306.8 0.5L308.8 2.6L310.8 0.5L312.8 2.6L314.8 0.5L316.8 2.6L318.8 0.5L320.8 2.6L322.8 0.5L324.8 2.6L326.8 0.5L328.8 2.6L330.8 0.5L332.8 2.6L334.8 0.5L336.8 2.6L338.8 0.5L340.8 2.6L342.8 0.5L344.8 2.6L346.8 0.5L348.8 2.6L350.8 0.5L352.8 2.6L354.8 0.5L356.8 2.6L358.8 0.5L360.8 2.6L362.8 0.5L364.8 2.6L366.8 0.5L368.8 2.6L370.8 0.5L372.8 2.6L374.8 0.5L376.8 2.6L378.8 0.5L380.8 2.6L382.8 0.5L384.8 2.6L386.8 0.5L388.8 2.6L390.8 0.5L392.8 2.6L394.8 0.5L396.8 2.6L398.8 0.5L400.8 2.6L402.8 0.5L404.8 2.6L406.8 0.5L408.8 2.6L408.8 0.5" stroke="#e04444" stroke-width="1" stroke-linejoin="round"/><path d="M0.0 1.3H18.6M0.0 2.9H18.6" stroke="#5a8fcc" stroke-width="0.8"/></svg>
<span class="t " style="left:433.74px;top:445.63px;font-size:12.60px;transform:scaleX(1.0630);color:#1e1e1e;">Le soir Marc et  Paul jouent au Footbal au club. Le Weekend ils font du vélo et  ils vont au cinema.</span>
<svg style="position:absolute;left:433.744px;top:457.2px" width="582.96" height="5" viewBox="0 0 582.96 5" fill="none"><path d="M18.6 2.6L20.6 0.5L22.6 2.6L24.6 0.5L26.6 2.6L28.6 0.5L30.6 2.6L32.6 0.5L34.6 2.6L36.6 0.5L38.6 2.6L40.2 0.5M126.5 2.6L128.5 0.5L130.5 2.6L132.5 0.5L134.5 2.6L136.5 0.5L138.5 2.6L140.5 0.5L142.5 2.6L144.5 0.5L146.5 2.6L148.5 0.5L150.5 2.6L152.5 0.5L154.5 2.6L156.5 0.5L158.5 2.6L160.5 0.5L162.5 2.6L163.0 0.5M185.4 2.6L187.4 0.5L189.4 2.6L191.4 0.5L193.4 2.6L195.4 0.5L197.4 2.6L199.4 0.5L201.4 2.6L203.4 0.5L205.4 2.6L207.4 0.5L209.4 2.6L211.4 0.5L213.4 2.6L215.4 0.5L217.4 2.6L219.4 0.5L221.4 2.6L223.4 0.5L225.4 2.6L227.4 0.5L229.4 2.6L230.1 0.5M363.1 2.6L365.1 0.5L367.1 2.6L369.1 0.5L371.1 2.6L373.1 0.5L375.1 2.6L375.7 0.5M424.1 2.6L426.1 0.5L428.1 2.6L430.1 0.5L432.1 2.6L434.1 0.5L436.1 2.6L438.1 0.5L440.1 2.6L442.1 0.5L444.1 2.6L446.1 0.5L448.1 2.6L448.7 0.5M471.0 2.6L473.0 0.5L475.0 2.6L477.0 0.5L479.0 2.6L481.0 0.5L483.0 2.6L485.0 0.5L487.0 2.6L489.0 0.5L491.0 2.6L493.0 0.5L495.0 2.6L497.0 0.5L499.0 2.6L501.0 0.5L503.0 2.6L505.0 0.5L507.0 2.6L509.0 0.5L511.0 2.6L512.7 0.5" stroke="#e04444" stroke-width="1" stroke-linejoin="round"/><path d="M77.4 1.3H122.8M77.4 2.9H122.8M303.0 1.3H359.4M303.0 2.9H359.4M452.4 1.3H471.0M452.4 2.9H471.0" stroke="#5a8fcc" stroke-width="0.8"/></svg>
<span class="t " style="left:433.74px;top:480.23px;font-size:12.60px;transform:scaleX(1.0616);color:#1e1e1e;">Marc et fils unique  mais Paul a une soeur Isabelle.Elle est jolie et intelligente. Le père de Paul est</span>
<svg style="position:absolute;left:433.744px;top:491.8px" width="580.96" height="5" viewBox="0 0 580.96 5" fill="none"><path d="M48.3 2.6L50.3 0.5L52.3 2.6L54.3 0.5L56.3 2.6L58.3 0.5L60.3 2.6L62.3 0.5L64.3 2.6L64.7 0.5M116.0 2.6L118.0 0.5L120.0 2.6L122.0 0.5L124.0 2.6L126.0 0.5L128.0 2.6L130.0 0.5L132.0 2.6L134.0 0.5L136.0 2.6L138.0 0.5L140.0 2.6L142.0 0.5L144.0 2.6L144.2 0.5M189.6 2.6L191.6 0.5L193.6 2.6L195.6 0.5L197.6 2.6L199.6 0.5L201.6 2.6L203.6 0.5L205.6 2.6L207.6 0.5L209.6 2.6L211.6 0.5L213.6 2.6L215.6 0.5L217.6 2.6L219.6 0.5L221.6 2.6L223.6 0.5L225.6 2.6L227.6 0.5L229.6 2.6L231.6 0.5L233.6 2.6L235.6 0.5L237.6 2.6L239.6 0.5L241.6 2.6L243.6 0.5L245.6 2.6L247.6 0.5L249.6 2.6L251.6 0.5L253.6 2.6L255.6 0.5L257.6 2.6L259.6 0.5L261.6 2.6L263.6 0.5L265.6 2.6L267.6 0.5L269.6 2.6L271.6 0.5L273.6 2.6L275.6 0.5L277.6 2.6L279.6 0.5L281.6 2.6L283.6 0.5L285.6 2.6L287.6 0.5L289.6 2.6L291.6 0.5L293.6 2.6L295.6 0.5L297.6 2.6L299.6 0.5L301.6 2.6L303.6 0.5L305.6 2.6L307.6 0.5L309.6 2.6L311.6 0.5L313.6 2.6L315.6 0.5L317.6 2.6L319.6 0.5L321.6 2.6L323.6 0.5L325.6 2.6L327.6 0.5L329.6 2.6L331.6 0.5L333.6 2.6L335.6 0.5L337.6 2.6L339.6 0.5L341.6 2.6L343.6 0.5L345.6 2.6L347.6 0.5L349.6 2.6L351.6 0.5L353.6 2.6L355.6 0.5L357.6 2.6L359.6 0.5L361.6 2.6L363.6 0.5L365.6 2.6L367.6 0.5L369.6 2.6L371.6 0.5L373.6 2.6L374.0 0.5M392.6 2.6L394.6 0.5L396.6 2.6L398.6 0.5L400.6 2.6L402.6 0.5L404.6 2.6L406.6 0.5L408.6 2.6L410.6 0.5L412.6 2.6L414.6 0.5L416.6 2.6L418.6 0.5L420.6 2.6L422.6 0.5L424.6 2.6L426.6 0.5L428.6 2.6L430.6 0.5L432.6 2.6L434.6 0.5L436.6 2.6L438.6 0.5L440.6 2.6L442.6 0.5L444.6 2.6L446.6 0.5L448.6 2.6L450.6 0.5L452.6 2.6L454.6 0.5L456.6 2.6L458.6 0.5L460.2 2.6M482.5 2.6L484.5 0.5L486.5 2.6L488.5 0.5L490.5 2.6L492.5 0.5L494.5 2.6L496.5 0.5L498.5 2.6L500.5 0.5L502.5 2.6L504.5 0.5L506.5 2.6L508.5 0.5L509.3 2.6M562.1 2.6L564.1 0.5L566.1 2.6L568.1 0.5L570.1 2.6L572.1 0.5L574.1 2.6L576.1 0.5L578.1 2.6L580.0 0.5" stroke="#e04444" stroke-width="1" stroke-linejoin="round"/><path d="M68.4 1.3H116.0M68.4 2.9H116.0" stroke="#5a8fcc" stroke-width="0.8"/></svg>
<span class="t " style="left:433.74px;top:500.03px;font-size:12.60px;transform:scaleX(1.1027);color:#1e1e1e;">ingénieur.</span>
<svg style="position:absolute;left:433.744px;top:511.6px" width="61.26" height="5" viewBox="0 0 61.26 5" fill="none"><path d="M0.0 2.6L2.0 0.5L4.0 2.6L6.0 0.5L8.0 2.6L10.0 0.5L12.0 2.6L14.0 0.5L16.0 2.6L18.0 0.5L20.0 2.6L22.0 0.5L24.0 2.6L26.0 0.5L28.0 2.6L30.0 0.5L32.0 2.6L34.0 0.5L36.0 2.6L38.0 0.5L40.0 2.6L42.0 0.5L44.0 2.6L46.0 0.5L48.0 2.6L50.0 0.5L52.0 2.6L54.0 0.5L56.0 2.6L58.0 0.5L60.0 2.6L60.3 0.5" stroke="#e04444" stroke-width="1" stroke-linejoin="round"/></svg>
<span class="t " style="left:433.74px;top:534.83px;font-size:12.60px;transform:scaleX(1.0473);color:#1e1e1e;">(enseigner= to teach, en ligne= online; L’ambassade= Embassy)</span>
<svg style="position:absolute;left:433.744px;top:546.4px" width="376.96" height="5" viewBox="0 0 376.96 5" fill="none"><path d="M4.4 2.6L6.4 0.5L8.4 2.6L10.4 0.5L12.4 2.6L14.4 0.5L16.4 2.6L18.4 0.5L20.4 2.6L22.4 0.5L24.4 2.6L26.4 0.5L28.4 2.6L30.4 0.5L32.4 2.6L34.4 0.5L36.4 2.6L38.4 0.5L40.4 2.6L42.4 0.5L44.4 2.6L46.4 0.5L48.4 2.6L50.4 0.5L52.4 2.6L54.4 0.5L56.4 2.6L58.4 0.5L60.4 2.6L62.4 0.5M128.0 2.6L130.0 0.5L132.0 2.6L134.0 0.5L136.0 2.6L138.0 0.5L140.0 2.6L142.0 0.5L144.0 2.6L146.0 0.5L148.0 2.6L150.0 0.5L152.0 2.6L154.0 0.5L156.0 2.6L158.0 0.5L160.0 2.6L162.0 0.5L164.0 2.6L166.0 0.5L168.0 2.6L170.0 0.5L172.0 2.6L174.0 0.5L174.2 2.6M228.2 2.6L230.2 0.5L232.2 2.6L234.2 0.5L236.2 2.6L238.2 0.5L240.2 2.6L242.2 0.5L244.2 2.6L246.2 0.5L248.2 2.6L250.2 0.5L252.2 2.6L254.2 0.5L256.2 2.6L258.2 0.5L260.2 2.6L262.2 0.5L264.2 2.6L266.2 0.5L268.2 2.6L270.2 0.5L272.2 2.6L274.2 0.5L276.2 2.6L278.2 0.5L280.2 2.6L282.2 0.5L284.2 2.6L286.2 0.5L288.2 2.6L290.2 0.5L292.2 2.6L294.2 0.5L296.2 2.6L298.2 0.5L300.2 2.6L302.2 0.5L304.2 2.6L305.9 0.5" stroke="#e04444" stroke-width="1" stroke-linejoin="round"/></svg>
<span class="t u" style="left:457.54px;top:568.81px;font-size:14.40px;transform:scaleX(0.9752);color:#111;font-weight:bold;">(a)Dites Vrai ou Faux(Tell if the statement is true or false)(Cochez la bonne</span>
<svg style="position:absolute;left:457.536px;top:583.2px" width="496.24" height="5" viewBox="0 0 496.24 5" fill="none"><path d="M0.0 2.6L2.0 0.5L4.0 2.6L6.0 0.5L8.0 2.6L10.0 0.5L12.0 2.6L14.0 0.5L16.0 2.6L18.0 0.5L20.0 2.6L22.0 0.5L24.0 2.6L26.0 0.5L28.0 2.6L30.0 0.5L32.0 2.6L34.0 0.5L36.0 2.6L38.0 0.5L40.0 2.6L42.0 0.5L44.0 2.6L46.0 0.5L48.0 2.6L50.0 0.5L52.0 2.6L54.0 0.5L56.0 2.6L58.0 0.5L60.0 2.6L62.0 0.5L64.0 2.6L66.0 0.5L68.0 2.6L70.0 0.5L72.0 2.6L74.0 0.5L76.0 2.6L78.0 0.5L80.0 2.6L82.0 0.5L84.0 2.6L86.0 0.5L88.0 2.6L90.0 0.5L92.0 2.6L94.0 0.5L96.0 2.6L98.0 0.5L100.0 2.6L102.0 0.5L102.2 2.6M379.0 2.6L381.0 0.5L383.0 2.6L385.0 0.5L387.0 2.6L389.0 0.5L391.0 2.6L393.0 0.5L395.0 2.6L397.0 0.5L399.0 2.6L401.0 0.5L403.0 2.6L405.0 0.5L407.0 2.6L409.0 0.5L411.0 2.6L413.0 0.5L415.0 2.6L417.0 0.5L419.0 2.6L421.0 0.5L423.0 2.6L425.0 0.5L427.0 2.6L429.0 0.5L431.0 2.6L433.0 0.5L433.6 2.6" stroke="#e04444" stroke-width="1" stroke-linejoin="round"/><path d="M106.1 1.3H143.6M106.1 2.9H143.6" stroke="#5a8fcc" stroke-width="0.8"/></svg>
<span class="t u" style="left:457.54px;top:591.21px;font-size:14.40px;transform:scaleX(0.9745);color:#111;font-weight:bold;">réponse(Tick the right answer)</span>
<svg style="position:absolute;left:457.536px;top:605.6px" width="205.04" height="5" viewBox="0 0 205.04 5" fill="none"><path d="M0.0 2.6L2.0 0.5L4.0 2.6L6.0 0.5L8.0 2.6L10.0 0.5L12.0 2.6L14.0 0.5L16.0 2.6L18.0 0.5L20.0 2.6L22.0 0.5L24.0 2.6L26.0 0.5L28.0 2.6L30.0 0.5L32.0 2.6L34.0 0.5L36.0 2.6L38.0 0.5L40.0 2.6L42.0 0.5L44.0 2.6L46.0 0.5L48.0 2.6L50.0 0.5L52.0 2.6L54.0 0.5L56.0 2.6L58.0 0.5L59.3 2.6" stroke="#e04444" stroke-width="1" stroke-linejoin="round"/></svg>
<span class="t " style="left:957.54px;top:591.21px;font-size:14.40px;transform:scaleX(1.1343);color:#111;font-weight:bold;">(</span>
<div class="" style="position:absolute;left:433.6px;top:288px;width:1px;height:17px;background:#333;"></div>
<div class="" style="position:absolute;left:458.4px;top:622.8px;width:577px;height:40.2px;border:3px solid #0c0c0c;box-sizing:border-box;"></div>
<div class="" style="position:absolute;left:507px;top:623px;width:2.6px;height:39px;background:#0c0c0c;"></div>
<div class="" style="position:absolute;left:915.4px;top:623px;width:2.6px;height:39px;background:#0c0c0c;"></div>
<div class="" style="position:absolute;left:971.2px;top:623px;width:2.6px;height:39px;background:#0c0c0c;"></div>
<div class="" style="position:absolute;left:459px;top:663px;width:1px;height:92.5px;background:#333;"></div>
<div class="" style="position:absolute;left:508px;top:663px;width:1px;height:92.5px;background:#222;"></div>
<div class="" style="position:absolute;left:916.2px;top:663px;width:1px;height:92.5px;background:#222;"></div>
<div class="" style="position:absolute;left:972.2px;top:663px;width:1px;height:92.5px;background:#222;"></div>
<div class="" style="position:absolute;left:1034px;top:663px;width:1px;height:92.5px;background:#8a8a8a;"></div>
<div class="" style="position:absolute;left:459px;top:700.6px;width:576px;height:1px;background:#333;"></div>
<div class="" style="position:absolute;left:459px;top:738px;width:576px;height:1px;background:#333;"></div>
<span class="t " style="left:466.80px;top:630.84px;font-size:13.30px;transform:scaleX(1.0441);color:#1e1e1e;">S.No:</span>
<svg style="position:absolute;left:466.802px;top:643px" width="35.73" height="5" viewBox="0 0 35.73 5" fill="none"><path d="M0.0 2.6L2.0 0.5L4.0 2.6L6.0 0.5L8.0 2.6L10.0 0.5L12.0 2.6L14.0 0.5L16.0 2.6L18.0 0.5L20.0 2.6L22.0 0.5L24.0 2.6L26.0 0.5L28.0 2.6L30.0 0.5L32.0 2.6L34.0 0.5L34.7 2.6" stroke="#e04444" stroke-width="1" stroke-linejoin="round"/></svg>
<span class="t " style="left:515.50px;top:630.84px;font-size:13.30px;transform:scaleX(1.1288);color:#1e1e1e;">Statement</span>
<span class="t " style="left:923.40px;top:630.84px;font-size:13.30px;transform:scaleX(1.1714);color:#1e1e1e;">Vrai</span>
<svg style="position:absolute;left:923.402px;top:643px" width="28.13" height="5" viewBox="0 0 28.13 5" fill="none"><path d="M0.0 2.6L2.0 0.5L4.0 2.6L6.0 0.5L8.0 2.6L10.0 0.5L12.0 2.6L14.0 0.5L16.0 2.6L18.0 0.5L20.0 2.6L22.0 0.5L24.0 2.6L26.0 0.5L27.1 2.6" stroke="#e04444" stroke-width="1" stroke-linejoin="round"/></svg>
<span class="t " style="left:979.50px;top:630.84px;font-size:13.30px;transform:scaleX(1.0596);color:#1e1e1e;">Faux</span>
<span class="t " style="left:467.60px;top:669.24px;font-size:13.30px;color:#1e1e1e;">1</span>
<span class="t " style="left:515.50px;top:669.24px;font-size:13.30px;transform:scaleX(1.1332);color:#1e1e1e;">Paul et Marc sont indiens</span>
<svg style="position:absolute;left:515.502px;top:681.4px" width="170.23" height="5" viewBox="0 0 170.23 5" fill="none"><path d="M88.8 2.6L90.8 0.5L92.8 2.6L94.8 0.5L96.8 2.6L98.8 0.5L100.8 2.6L102.8 0.5L104.8 2.6L106.8 0.5L108.8 2.6L110.8 0.5L112.8 2.6L114.8 0.5L116.8 2.6L117.3 0.5M121.5 2.6L123.5 0.5L125.5 2.6L127.5 0.5L129.5 2.6L131.5 0.5L133.5 2.6L135.5 0.5L137.5 2.6L139.5 0.5L141.5 2.6L143.5 0.5L145.5 2.6L147.5 0.5L149.5 2.6L151.5 0.5L153.5 2.6L155.5 0.5L157.5 2.6L159.5 0.5L161.5 2.6L163.5 0.5L165.5 2.6L167.5 0.5L169.2 2.6" stroke="#e04444" stroke-width="1" stroke-linejoin="round"/><path d="M117.3 1.3H121.5M117.3 2.9H121.5" stroke="#5a8fcc" stroke-width="0.8"/></svg>
<span class="t " style="left:467.60px;top:706.64px;font-size:13.30px;color:#1e1e1e;">2</span>
<span class="t " style="left:515.50px;top:706.64px;font-size:13.30px;transform:scaleX(1.0968);color:#1e1e1e;">La mère de Marc ne travaille pas</span>
<svg style="position:absolute;left:515.502px;top:718.8px" width="213.43" height="5" viewBox="0 0 213.43 5" fill="none"><path d="M20.3 2.6L22.3 0.5L24.3 2.6L26.3 0.5L28.3 2.6L30.3 0.5L32.3 2.6L34.3 0.5L36.3 2.6L38.3 0.5L40.3 2.6L42.3 0.5L44.3 2.6L46.3 0.5L48.3 2.6L50.3 0.5L52.3 2.6L53.5 0.5M134.6 2.6L136.6 0.5L138.6 2.6L140.6 0.5L142.6 2.6L144.6 0.5L146.6 2.6L148.6 0.5L150.6 2.6L152.6 0.5L154.6 2.6L156.6 0.5L158.6 2.6L160.6 0.5L162.6 2.6L164.6 0.5L166.6 2.6L168.6 0.5L170.6 2.6L172.6 0.5L174.6 2.6L176.6 0.5L178.6 2.6L180.6 0.5L182.6 2.6L184.6 0.5L184.9 2.6" stroke="#e04444" stroke-width="1" stroke-linejoin="round"/></svg>
<span class="t " style="left:467.60px;top:743.14px;font-size:13.30px;color:#1e1e1e;">3</span>
<span class="t " style="left:515.50px;top:743.14px;font-size:13.30px;transform:scaleX(1.0905);color:#1e1e1e;">Paul  habite en Inde</span>
<div id="status2"></div>
<svg style="position:absolute;left:471px;top:107.3px" width="80" height="80" viewBox="0 0 80 80" fill="none"><circle cx="40" cy="40" r="34.200" stroke="#ecec26" stroke-width="3.600"/></svg>
<svg style="position:absolute;left:509px;top:144.2px" width="14" height="21" viewBox="0 0 14 21" fill="none"><path d="M1.500 1.500v14.800l3.500-3.300 2.600 5.800 2.200-1-2.600-5.600h4.800z" fill="#fff" stroke="#111" stroke-width="1" stroke-linejoin="round"/></svg>
<svg style="position:absolute;left:-3px;top:149px" width="9" height="10" viewBox="0 0 9 10" fill="none"><path d="M0 2.500h6 M1 5.500l2.500 2.500 2.500-2.500" stroke="#cfcfcf" stroke-width="1.200"/></svg>
<div class="" style="position:absolute;left:1267px;top:757px;width:27px;height:3px;background:#565656;"></div>
<div class="" style="position:absolute;left:1157px;top:758.4px;width:3px;height:1.6px;background:#d8d8d8;"></div>
<div class="" style="position:absolute;left:1163px;top:758.4px;width:3px;height:1.6px;background:#d8d8d8;"></div>
<div class="" style="position:absolute;left:1170px;top:758.4px;width:3px;height:1.6px;background:#d8d8d8;"></div>
<div class="" style="position:absolute;left:1231px;top:758.4px;width:4px;height:1.6px;background:#d8d8d8;"></div>
<div class="" style="position:absolute;left:1238px;top:758.4px;width:4px;height:1.6px;background:#d8d8d8;"></div>
<div class="" style="position:absolute;left:1274px;top:758.4px;width:12px;height:1.6px;background:#d8d8d8;"></div>
<div class="" style="position:absolute;left:1308px;top:758.4px;width:13px;height:1.6px;background:#d8d8d8;"></div>
<div class="" style="position:absolute;left:396px;top:758.4px;width:3px;height:1.6px;background:#d8d8d8;"></div>
</body></html>
